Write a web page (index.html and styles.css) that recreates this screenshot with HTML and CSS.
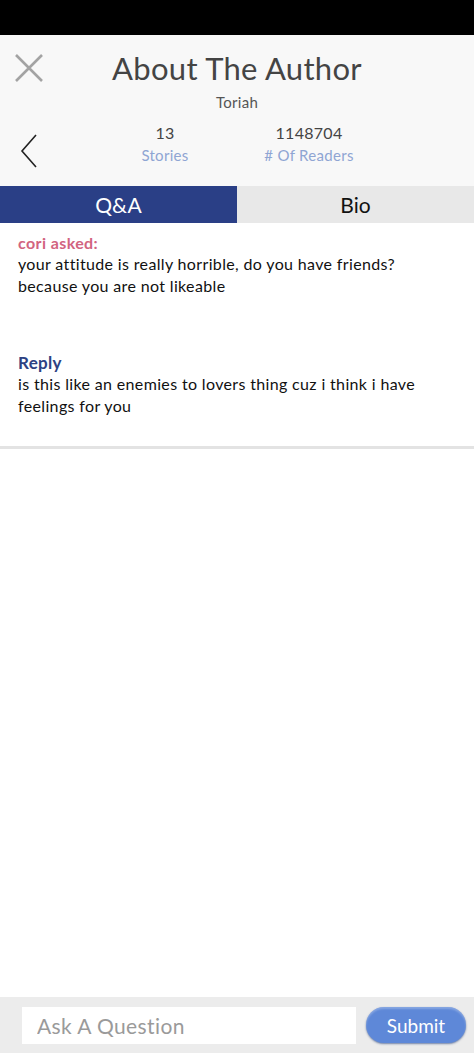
FILE: index.html
```html
<!DOCTYPE html>
<html lang="en">
  <head>
    <meta charset="UTF-8" />
    <meta name="viewport" content="width=device-width, initial-scale=1.0" />
    <title>About The Author</title>
    <link rel="stylesheet" href="styles.css">
  </head>
  <body>
    <div class="status-bar"></div>

    <div class="header">
      <div class="title-row">
        <button class="icon-button close-button" aria-label="Close">
          <svg width="30" height="30" viewBox="0 0 30 30">
            <path d="M2 2 L28 28 M28 2 L2 28" stroke="#a3a3a3" stroke-width="2.6" fill="none" />
          </svg>
        </button>
        <h1>About The Author</h1>
      </div>
      <div class="author-name">Toriah</div>
      <div class="stats-row">
        <button class="icon-button back-button" aria-label="Back">
          <svg width="18" height="34" viewBox="0 0 18 34">
            <path d="M16 1 L2 17 L16 33" stroke="#222" stroke-width="1.6" fill="none" />
          </svg>
        </button>
        <div class="stat stat-stories">
          <div class="stat-value">13</div>
          <div class="stat-label">Stories</div>
        </div>
        <div class="stat stat-readers">
          <div class="stat-value">1148704</div>
          <div class="stat-label"># Of Readers</div>
        </div>
      </div>
    </div>

    <div class="tabs">
      <div class="tab active">Q&amp;A</div>
      <div class="tab">Bio</div>
    </div>

    <div class="qa-list">
      <div class="qa-item">
        <div class="asker">cori asked:</div>
        <div class="qa-text">your attitude is really horrible, do you have friends? because you are not likeable</div>
        <div class="reply-label">Reply</div>
        <div class="qa-text">is this like an enemies to lovers thing cuz i think i have feelings for you</div>
      </div>
    </div>

    <div class="ask-bar">
      <input type="text" class="ask-input" placeholder="Ask A Question" />
      <button class="submit-button">Submit</button>
    </div>
  </body>
</html>
```

FILE: styles.css
```css
body {
  font-family: Lato, "Open Sans", sans-serif;
  margin: 0;
  background-color: #ffffff;
  color: #111;
  height: 1053px;
  display: flex;
  flex-direction: column;
  overflow: hidden;
}
.status-bar {
  height: 35px;
  background-color: #000;
}
.header {
  background-color: #f8f8f8;
  height: 151px;
  display: flex;
  flex-direction: column;
}
.icon-button {
  background: none;
  border: none;
  padding: 0;
  cursor: pointer;
  display: flex;
}
.title-row {
  display: flex;
  align-items: center;
  height: 64px;
  padding: 1px 0 0 14px;
}
.close-button {
  width: 30px;
}
.title-row h1 {
  flex: 1;
  margin: 0 44px 0 0;
  text-align: center;
  font-weight: 400;
  font-size: 31px;
  color: #444;
  letter-spacing: 0.3px;
}
.author-name {
  text-align: center;
  font-size: 15px;
  color: #555;
  margin-top: -7px;
  letter-spacing: 0.3px;
}
.stats-row {
  display: flex;
  align-items: center;
  padding: 9px 0 0 20px;
}
.back-button {
  width: 18px;
  margin-top: 14px;
}
.stat {
  text-align: center;
  font-size: 15px;
  line-height: 22px;
  letter-spacing: 0.3px;
}
.stat-stories {
  width: 80px;
  margin-left: 87px;
}
.stat-readers {
  width: 130px;
  margin-left: 39px;
}
.stat-value {
  color: #444;
  font-size: 16px;
}
.stat-label {
  color: #8fa5d3;
}
.tabs {
  display: flex;
  height: 37px;
}
.tab {
  flex: 1;
  display: flex;
  align-items: center;
  justify-content: center;
  font-size: 21px;
  background-color: #e8e8e8;
  color: #111;
}
.tab.active {
  background-color: #2a3f86;
  color: #fff;
}
.qa-list {
  flex: 1;
}
.qa-item {
  padding: 10px 18px 29px;
  border-bottom: 3px solid #e3e3e3;
}
.asker {
  color: #d2647f;
  font-weight: 700;
  font-size: 16px;
  letter-spacing: 0.4px;
  line-height: 20px;
}
.qa-text {
  font-size: 16px;
  letter-spacing: 0.35px;
  line-height: 22px;
  color: #111;
}
.reply-label {
  color: #2d4283;
  font-weight: 700;
  font-size: 17px;
  letter-spacing: 0.3px;
  line-height: 20px;
  margin-top: 56px;
}
.ask-bar {
  background-color: #ececec;
  height: 56px;
  display: flex;
  align-items: center;
  padding: 0 8px 0 22px;
  gap: 10px;
}
.ask-input {
  width: 334px;
  height: 37px;
  box-sizing: border-box;
  border: none;
  background-color: #fff;
  padding: 0 15px;
  font-family: Lato, sans-serif;
  font-size: 21px;
  letter-spacing: 0.4px;
  color: #333;
}
.ask-input::placeholder {
  color: #9a9a9a;
}
.submit-button {
  width: 100px;
  height: 36px;
  border: none;
  border-radius: 18px;
  background-color: #5e88d8;
  color: #fff;
  font-family: Lato, sans-serif;
  font-size: 19px;
  box-shadow: 0 1px 2px rgba(30, 60, 120, 0.6), inset 0 2px 2px rgba(255, 255, 255, 0.25);
  cursor: pointer;
}
```
